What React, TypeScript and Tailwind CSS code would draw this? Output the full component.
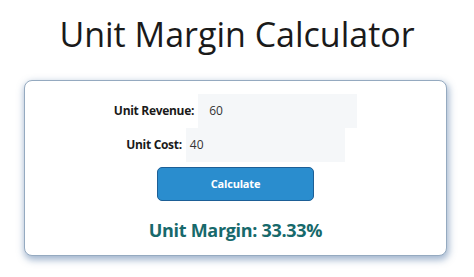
export default function App() {
  return (
    <div className="w-[474px] h-[277px] bg-white" style={{ fontFamily: '"Open Sans", "Noto Sans", sans-serif' }}>
      <h1 className="pt-[10px] h-[80px] text-center text-[34px] leading-[48px] text-[#1a1a1a] font-normal">
        Unit Margin Calculator
      </h1>
      <div className="ml-6 w-[423px] h-[176px] rounded-[8px] border border-[#95aac0] bg-white shadow-[1px_3px_7px_1px_rgba(70,110,160,0.5)] pt-[13px] flex flex-col items-center">
        <div className="flex items-center gap-[4px] h-[34px]">
          <span className="text-[12px] font-bold text-[#1a1a1a] tracking-[-0.3px]">Unit Revenue:</span>
          <div className="w-[159px] h-[34px] bg-[#f5f7f9] pl-[11px] flex items-center text-[12px] text-[#333]">60</div>
        </div>
        <div className="flex items-center gap-[4px] h-[34px]">
          <span className="text-[12px] font-bold text-[#1a1a1a] tracking-[-0.3px]">Unit Cost:</span>
          <div className="w-[159px] h-[34px] bg-[#f5f7f9] pl-[4px] flex items-center text-[12px] text-[#333]">40</div>
        </div>
        <button className="mt-[5px] w-[157px] h-[34px] rounded-[5px] bg-[#2a8dce] border border-[#1d5f96] text-white text-[11px] font-bold tracking-[-0.2px]">
          Calculate
        </button>
        <div className="mt-[17px] text-[18px] font-bold text-[#17696b] leading-[24px] tracking-[-0.3px]">Unit Margin: 33.33%</div>
      </div>
    </div>
  );
}
